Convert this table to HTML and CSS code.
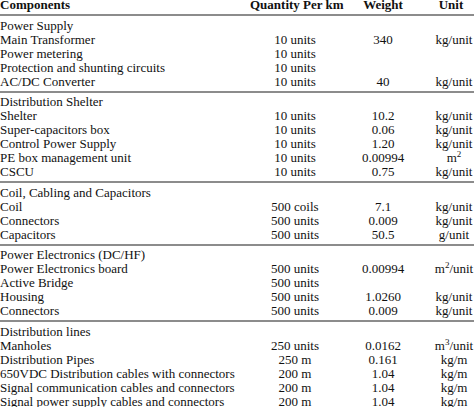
FILE: index.html
```html
<!DOCTYPE html>
<html>
<head>
<meta charset="utf-8">
<link rel="stylesheet" href="styles.css">
</head>
<body>
<div class="table">
  <div class="row head">
    <div class="c1">Components</div><div class="c2">Quantity Per km</div><div class="c3">Weight</div><div class="c4">Unit</div>
  </div>
  <div class="rule"></div>
  <div class="section">
    <div class="row"><div class="c1">Power Supply</div><div class="c2"></div><div class="c3"></div><div class="c4"></div></div>
    <div class="row"><div class="c1">Main Transformer</div><div class="c2">10 units</div><div class="c3">340</div><div class="c4">kg/unit</div></div>
    <div class="row"><div class="c1">Power metering</div><div class="c2">10 units</div><div class="c3"></div><div class="c4"></div></div>
    <div class="row"><div class="c1">Protection and shunting circuits</div><div class="c2">10 units</div><div class="c3"></div><div class="c4"></div></div>
    <div class="row"><div class="c1">AC/DC Converter</div><div class="c2">10 units</div><div class="c3">40</div><div class="c4">kg/unit</div></div>
  </div>
  <div class="rule"></div>
  <div class="section">
    <div class="row"><div class="c1">Distribution Shelter</div><div class="c2"></div><div class="c3"></div><div class="c4"></div></div>
    <div class="row"><div class="c1">Shelter</div><div class="c2">10 units</div><div class="c3">10.2</div><div class="c4">kg/unit</div></div>
    <div class="row"><div class="c1">Super-capacitors box</div><div class="c2">10 units</div><div class="c3">0.06</div><div class="c4">kg/unit</div></div>
    <div class="row"><div class="c1">Control Power Supply</div><div class="c2">10 units</div><div class="c3">1.20</div><div class="c4">kg/unit</div></div>
    <div class="row"><div class="c1">PE box management unit</div><div class="c2">10 units</div><div class="c3">0.00994</div><div class="c4">m<sup>2</sup></div></div>
    <div class="row"><div class="c1">CSCU</div><div class="c2">10 units</div><div class="c3">0.75</div><div class="c4">kg/unit</div></div>
  </div>
  <div class="rule"></div>
  <div class="section">
    <div class="row"><div class="c1">Coil, Cabling and Capacitors</div><div class="c2"></div><div class="c3"></div><div class="c4"></div></div>
    <div class="row"><div class="c1">Coil</div><div class="c2">500 coils</div><div class="c3">7.1</div><div class="c4">kg/unit</div></div>
    <div class="row"><div class="c1">Connectors</div><div class="c2">500 units</div><div class="c3">0.009</div><div class="c4">kg/unit</div></div>
    <div class="row"><div class="c1">Capacitors</div><div class="c2">500 units</div><div class="c3">50.5</div><div class="c4">g/unit</div></div>
  </div>
  <div class="rule"></div>
  <div class="section">
    <div class="row"><div class="c1">Power Electronics (DC/HF)</div><div class="c2"></div><div class="c3"></div><div class="c4"></div></div>
    <div class="row"><div class="c1">Power Electronics board</div><div class="c2">500 units</div><div class="c3">0.00994</div><div class="c4">m<sup>2</sup>/unit</div></div>
    <div class="row"><div class="c1">Active Bridge</div><div class="c2">500 units</div><div class="c3"></div><div class="c4"></div></div>
    <div class="row"><div class="c1">Housing</div><div class="c2">500 units</div><div class="c3">1.0260</div><div class="c4">kg/unit</div></div>
    <div class="row"><div class="c1">Connectors</div><div class="c2">500 units</div><div class="c3">0.009</div><div class="c4">kg/unit</div></div>
  </div>
  <div class="rule"></div>
  <div class="section">
    <div class="row"><div class="c1">Distribution lines</div><div class="c2"></div><div class="c3"></div><div class="c4"></div></div>
    <div class="row"><div class="c1">Manholes</div><div class="c2">250 units</div><div class="c3">0.0162</div><div class="c4">m<sup>3</sup>/unit</div></div>
    <div class="row"><div class="c1">Distribution Pipes</div><div class="c2">250 m</div><div class="c3">0.161</div><div class="c4">kg/m</div></div>
    <div class="row"><div class="c1">650VDC Distribution cables with connectors</div><div class="c2">200 m</div><div class="c3">1.04</div><div class="c4">kg/m</div></div>
    <div class="row"><div class="c1">Signal communication cables and connectors</div><div class="c2">200 m</div><div class="c3">1.04</div><div class="c4">kg/m</div></div>
    <div class="row"><div class="c1">Signal power supply cables and connectors</div><div class="c2">200 m</div><div class="c3">1.04</div><div class="c4">kg/m</div></div>
  </div>
</div>
</body>
</html>
```
FILE: styles.css
```css
html, body {
  margin: 0;
  padding: 0;
  background: #ffffff;
  overflow: hidden;
}
body {
  width: 474px;
  height: 407px;
}
.table {
  width: 484px;
  margin-top: -2px;
  font-family: "Liberation Serif", "Times New Roman", serif;
  font-size: 13px;
  color: #111111;
}
.row {
  display: grid;
  grid-template-columns: 250px 90px 86px 56px;
  height: 14px;
  line-height: 14px;
  white-space: nowrap;
}
.row .c2, .row .c3, .row .c4 {
  text-align: center;
}
.head {
  font-weight: bold;
}
.head .c4 {
  padding-right: 6px;
}
.rule {
  height: 2px;
  background: #8c8c8c;
  margin: 2px 0 2.5px;
}
sup {
  font-size: 9px;
  line-height: 0;
  vertical-align: 5px;
}
```
